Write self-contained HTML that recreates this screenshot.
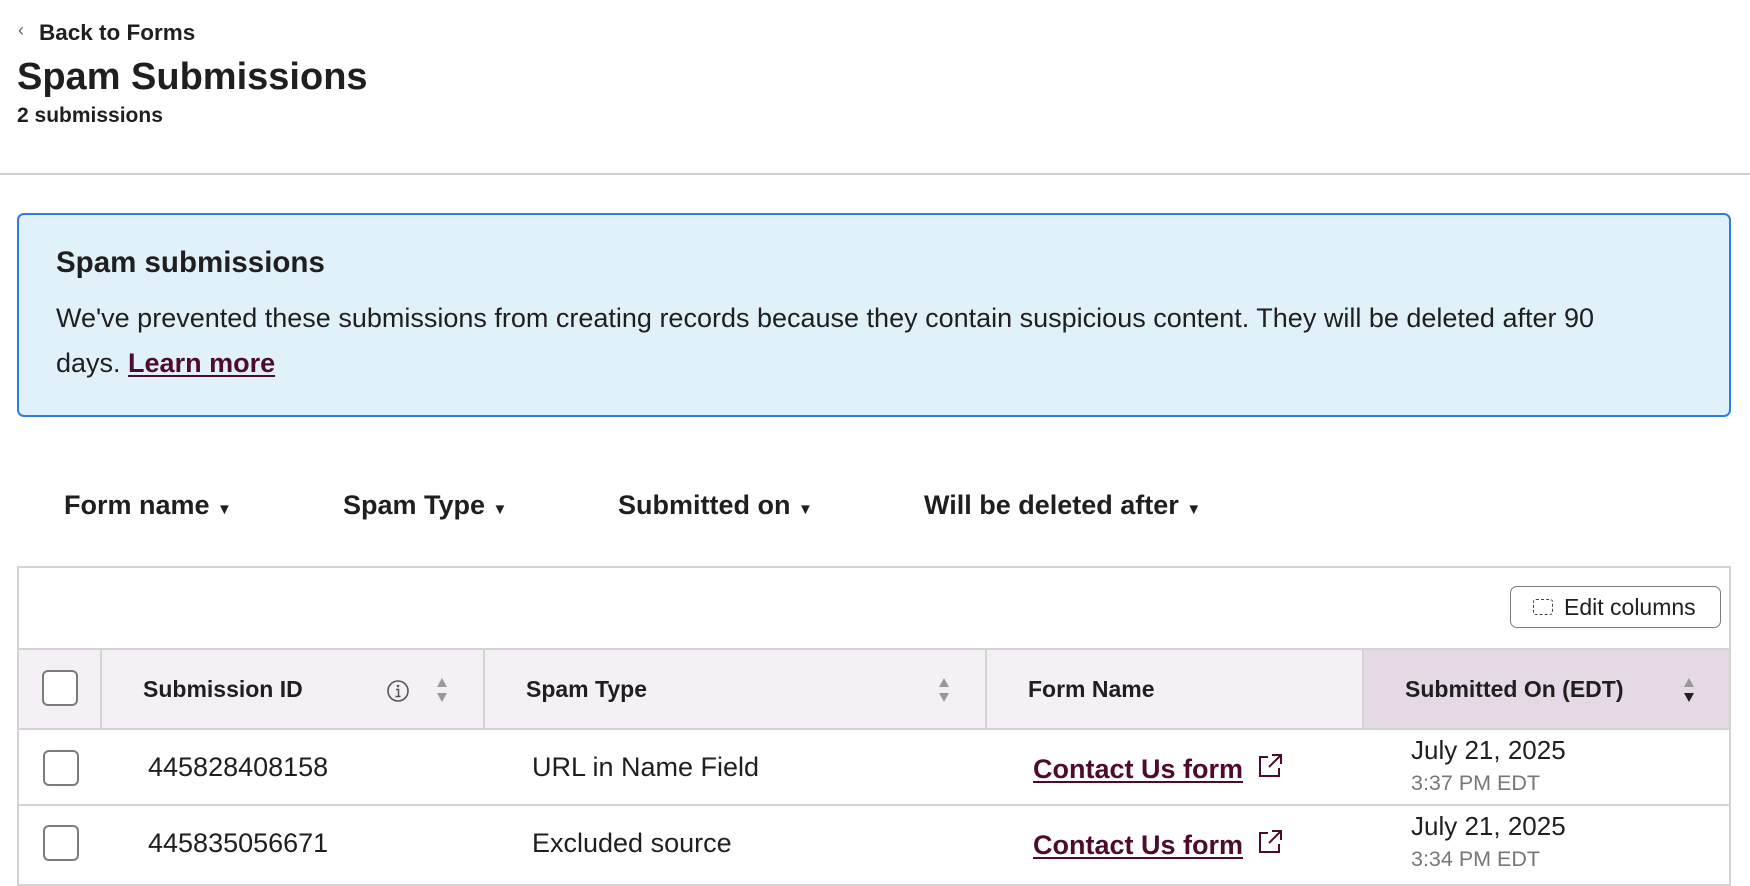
<!DOCTYPE html>
<html><head><meta charset="utf-8"><style>
*{box-sizing:border-box;margin:0;padding:0}
body{width:1750px;height:878px;overflow:hidden;background:#fff;font-family:"Liberation Sans",sans-serif;color:#1f1f1f;position:relative}
.a{position:absolute;white-space:nowrap;line-height:1.15}
.b{font-weight:bold}
.link{color:#4f0a2f;font-weight:bold;text-decoration:underline;text-underline-offset:3px}
.cb{position:absolute;width:36px;height:36px;border:2px solid #7c7c7c;border-radius:6px;background:#fff}
.sort{position:absolute;width:12px;height:26px}
</style></head><body>
<div class="a" style="left:18px;top:20px;font-size:18px;color:#666">&#8249;</div>
<div class="a b" style="left:39px;top:20px;font-size:22.5px">Back to Forms</div>
<div class="a b" style="left:17px;top:56px;font-size:38px">Spam Submissions</div>
<div class="a b" style="left:17px;top:104px;font-size:21px">2 submissions</div>
<div class="a" style="left:0;top:173px;width:1750px;height:2px;background:#d0d0d0"></div>

<div class="a" style="left:17px;top:213px;width:1714px;height:204px;background:#e1f1fa;border:2px solid #2f7de1;border-radius:7px"></div>
<div class="a b" style="left:56px;top:246px;font-size:29.5px">Spam submissions</div>
<div class="a" style="left:56px;top:296px;font-size:27px;line-height:45px;white-space:normal;width:1660px">We've prevented these submissions from creating records because they contain suspicious content. They will be deleted after 90<br>days. <span class="link">Learn more</span></div>

<div class="a b" style="left:64px;top:490px;font-size:27px">Form name <span style="font-size:15px">&#9660;</span></div>
<div class="a b" style="left:343px;top:490px;font-size:27px">Spam Type <span style="font-size:15px">&#9660;</span></div>
<div class="a b" style="left:618px;top:490px;font-size:27px">Submitted on <span style="font-size:15px">&#9660;</span></div>
<div class="a b" style="left:924px;top:490px;font-size:27px">Will be deleted after <span style="font-size:15px">&#9660;</span></div>

<div class="a" style="left:17px;top:566px;width:1714px;height:320px;border:2px solid #d4d4d4"></div>
<div class="a" style="left:1510px;top:586px;width:211px;height:42px;border:1.5px solid #7c7c7c;border-radius:7px;background:#fff"></div>
<div class="a" style="left:1533px;top:599px;width:20px;height:16px;border:1.5px dashed #444;border-radius:3px"></div>
<div class="a" style="left:1564px;top:594px;font-size:23px">Edit columns</div>

<div class="a" style="left:19px;top:648px;width:1710px;height:82px;background:#f5f0f6;border-top:2px solid #d4d4d4;border-bottom:2px solid #d4d4d4"></div>
<div class="a" style="left:1363px;top:650px;width:366px;height:78px;background:#e5d9e6"></div>
<div class="a" style="left:100px;top:650px;width:2px;height:78px;background:#d4d4d4"></div>
<div class="a" style="left:483px;top:650px;width:2px;height:78px;background:#d4d4d4"></div>
<div class="a" style="left:985px;top:650px;width:2px;height:78px;background:#d4d4d4"></div>
<div class="a" style="left:1362px;top:650px;width:2px;height:78px;background:#d4d4d4"></div>

<div class="cb" style="left:42px;top:670px"></div>
<div class="a b" style="left:143px;top:676px;font-size:23px">Submission ID</div>
<svg class="a" style="left:386px;top:679px" width="24" height="24" viewBox="0 0 24 24"><circle cx="12" cy="12" r="10" fill="none" stroke="#555" stroke-width="1.6"/><circle cx="12" cy="7" r="1.3" fill="#555"/><path d="M10 10.5h2.5v7M9.5 17.5h5" stroke="#555" stroke-width="1.5" fill="none"/></svg>
<svg class="sort" style="left:436px;top:677px" viewBox="0 0 12 26"><path d="M6 1l5 9H1z" fill="#999"/><path d="M6 25l5-9H1z" fill="#999"/></svg>
<div class="a b" style="left:526px;top:676px;font-size:23px">Spam Type</div>
<svg class="sort" style="left:938px;top:677px" viewBox="0 0 12 26"><path d="M6 1l5 9H1z" fill="#999"/><path d="M6 25l5-9H1z" fill="#999"/></svg>
<div class="a b" style="left:1028px;top:676px;font-size:23px">Form Name</div>
<div class="a b" style="left:1405px;top:676px;font-size:23px">Submitted On (EDT)</div>
<svg class="sort" style="left:1683px;top:677px" viewBox="0 0 12 26"><path d="M6 1l5 9H1z" fill="#999"/><path d="M6 25l5-9H1z" fill="#222"/></svg>

<div class="a" style="left:19px;top:804px;width:1710px;height:2px;background:#d4d4d4"></div>

<div class="cb" style="left:43px;top:750px"></div>
<div class="a" style="left:148px;top:752px;font-size:27px">445828408158</div>
<div class="a" style="left:532px;top:752px;font-size:27px">URL in Name Field</div>
<div class="a link" style="left:1033px;top:754px;font-size:27px">Contact Us form</div>
<svg class="a" style="left:1257px;top:753px" width="26" height="26" viewBox="0 0 26 26"><path d="M11 4H3v19h19v-8M15 2h9v9M24 2L12 14" fill="none" stroke="#4f0a2f" stroke-width="2"/></svg>
<div class="a" style="left:1411px;top:736px;font-size:26px">July 21, 2025</div>
<div class="a" style="left:1411px;top:771px;font-size:21.5px;color:#777">3:37 PM EDT</div>

<div class="cb" style="left:43px;top:825px"></div>
<div class="a" style="left:148px;top:828px;font-size:27px">445835056671</div>
<div class="a" style="left:532px;top:828px;font-size:27px">Excluded source</div>
<div class="a link" style="left:1033px;top:830px;font-size:27px">Contact Us form</div>
<svg class="a" style="left:1257px;top:829px" width="26" height="26" viewBox="0 0 26 26"><path d="M11 4H3v19h19v-8M15 2h9v9M24 2L12 14" fill="none" stroke="#4f0a2f" stroke-width="2"/></svg>
<div class="a" style="left:1411px;top:812px;font-size:26px">July 21, 2025</div>
<div class="a" style="left:1411px;top:847px;font-size:21.5px;color:#777">3:34 PM EDT</div>
</body></html>
